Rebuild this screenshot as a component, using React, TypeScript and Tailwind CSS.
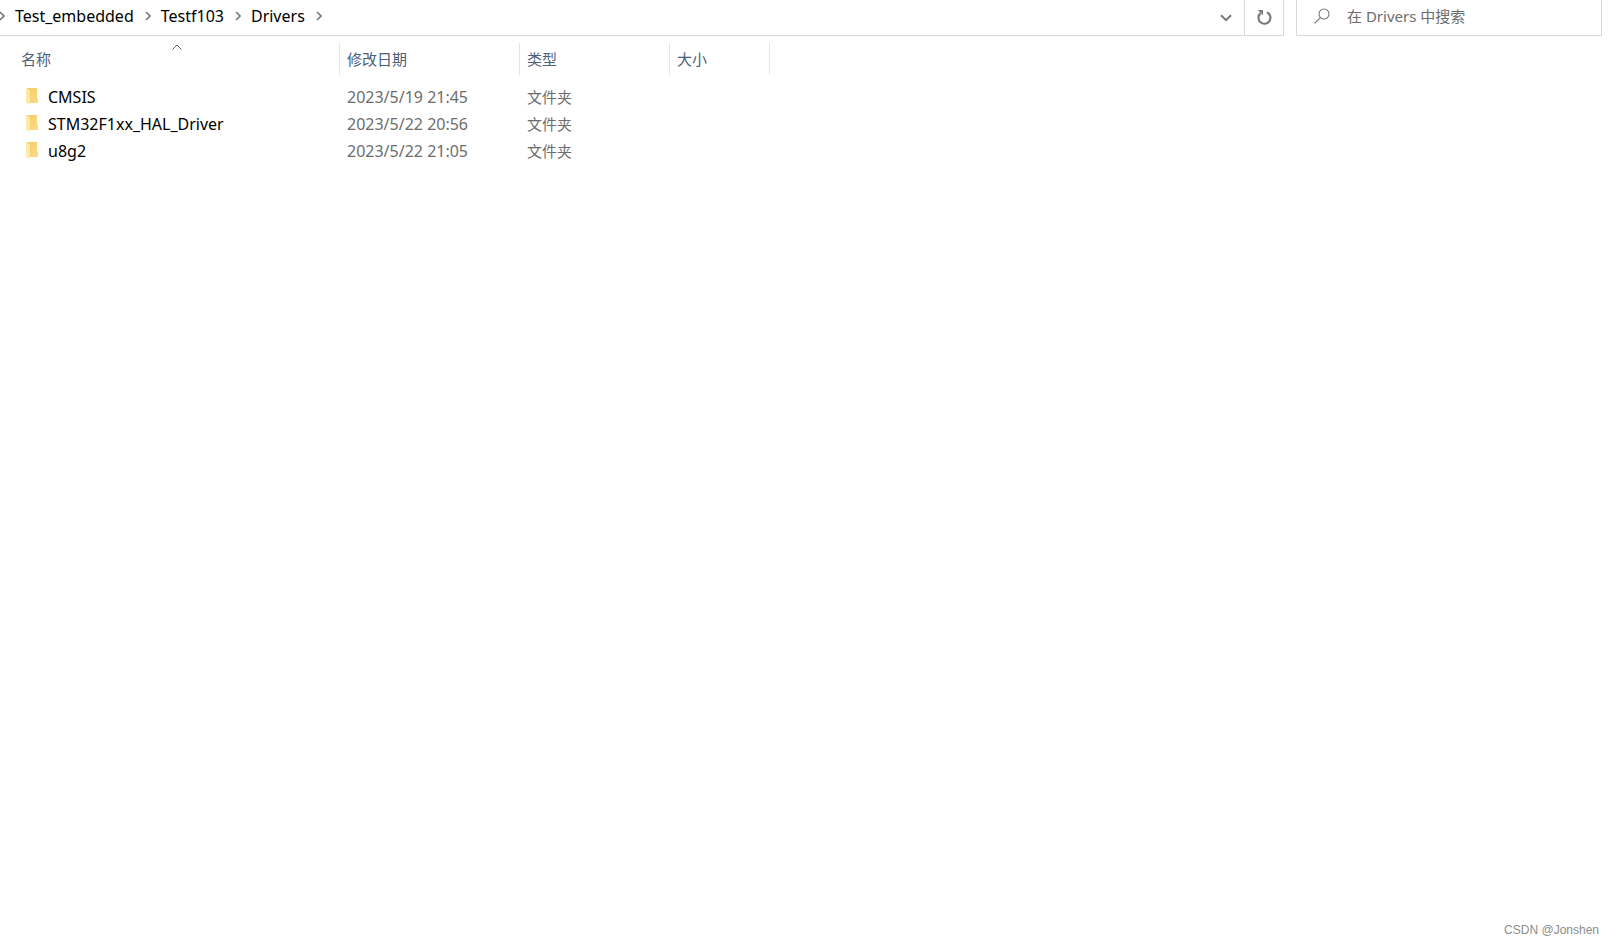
import { useState } from "react";

interface Entry {
  name: string;
  modified: string;
  type: string;
}

const crumbs = ["Test_embedded", "Testf103", "Drivers"];

const entries: Entry[] = [
  { name: "CMSIS", modified: "2023/5/19 21:45", type: "文件夹" },
  { name: "STM32F1xx_HAL_Driver", modified: "2023/5/22 20:56", type: "文件夹" },
  { name: "u8g2", modified: "2023/5/22 21:05", type: "文件夹" },
];

function CrumbChevron() {
  return (
    <svg viewBox="0 0 6 10" className="h-[10px] w-[6px] shrink-0" aria-hidden="true">
      <path d="M1 1l4 4-4 4" fill="none" stroke="#7a7a7a" strokeWidth="1.6" />
    </svg>
  );
}

function FolderIcon() {
  return (
    <svg viewBox="0 0 13 20" className="h-5 w-[13px] shrink-0" aria-hidden="true">
      <defs>
        <linearGradient id="folder-back" x1="0" y1="0" x2="1" y2="1">
          <stop offset="0" stopColor="#f1cb6b" />
          <stop offset="1" stopColor="#fbdc83" />
        </linearGradient>
      </defs>
      <path d="M1 1h10v9.5l1 1V16H1z" fill="url(#folder-back)" />
      <path d="M0 1l4 2.2v11.3L3 18 0 15.5z" fill="#ffe9a9" />
    </svg>
  );
}

function AddressBar() {
  return (
    <div className="flex h-9 min-w-0 flex-1 border-r border-b border-[#d9d9d9]">
      <nav aria-label="路径" className="flex min-w-0 flex-1 items-center pb-1">
        <div className="flex w-[5px] justify-end overflow-hidden">
          <CrumbChevron />
        </div>
        <ol className="flex items-center">
          {crumbs.map((crumb) => (
            <li key={crumb} className="flex items-center">
              <a href="#" className="pr-[11px] pl-[10px] text-[16px] leading-[20px] text-black">
                {crumb}
              </a>
              <CrumbChevron />
            </li>
          ))}
        </ol>
      </nav>
      <button type="button" aria-label="以前的位置" className="flex w-9 items-center justify-center">
        <svg viewBox="0 0 12 8" className="h-2 w-3">
          <path d="M1 1.2l5 5 5-5" fill="none" stroke="#777" strokeWidth="2" />
        </svg>
      </button>
      <button
        type="button"
        aria-label="刷新"
        className="flex w-[39px] items-center justify-center border-l border-[#d9d9d9] pb-[1px]"
      >
        <svg viewBox="0 0 16 16" className="h-4 w-4">
          <path d="M11 3.300A6 6 0 1 1 4.600 4.100" fill="none" stroke="#777" strokeWidth="2.1" />
          <path d="M1.800 1H7v5.200L5.300 4.600 3.600 2.700z" fill="#777" />
        </svg>
      </button>
    </div>
  );
}

function SearchBox() {
  const [query, setQuery] = useState("");

  return (
    <label className="flex h-9 w-[306px] items-center border-x border-b border-[#d9d9d9] pb-1 pl-[17px]">
      <svg viewBox="0 0 16 16" className="h-4 w-4 shrink-0" aria-hidden="true">
        <circle cx="10" cy="6" r="5" fill="none" stroke="#777" strokeWidth="1.1" />
        <path d="M6.4 9.6L.6 15.4" stroke="#777" strokeWidth="1.2" />
      </svg>
      <input
        type="text"
        aria-label="搜索"
        placeholder="在 Drivers 中搜索"
        value={query}
        onChange={(e) => setQuery(e.target.value)}
        className="ml-[17px] min-w-0 flex-1 bg-transparent outline-none placeholder:text-[#6d6d6d]"
      />
    </label>
  );
}

export default function App() {
  return (
    <div className="flex min-h-screen flex-col bg-white font-['Noto_Sans','Noto_Sans_CJK_SC',sans-serif] text-[15px] leading-[20px]">
      <header className="flex gap-3 pr-3">
        <AddressBar />
        <SearchBox />
      </header>

      <main className="flex-1 pt-[7px]">
        <table className="w-[770px] table-fixed border-separate border-spacing-0 text-left">
          <thead>
            <tr className="h-8 text-[#4c607a]">
              <th className="relative w-[340px] border-r border-[#e5e5e5] pl-[21px] font-normal">
                <button type="button">名称</button>
                <svg viewBox="0 0 10 6" className="absolute top-px left-[172px] h-[6px] w-[10px]" aria-hidden="true">
                  <path d="M.5 5.500L5 1l4.500 4.500" fill="none" stroke="#666" />
                </svg>
              </th>
              <th className="w-[180px] border-r border-[#e5e5e5] pl-[7px] font-normal">
                <button type="button">修改日期</button>
              </th>
              <th className="w-[150px] border-r border-[#e5e5e5] pl-[7px] font-normal">
                <button type="button">类型</button>
              </th>
              <th className="w-[100px] border-r border-[#e5e5e5] pl-[7px] font-normal">
                <button type="button">大小</button>
              </th>
            </tr>
          </thead>
          <tbody className="before:block before:h-2">
            {entries.map((entry) => (
              <tr key={entry.name} className="h-[27px] text-[#6d6d6d]">
                <td className="pl-[26px] text-[16px] leading-[20px] text-black">
                  <div className="flex items-center gap-[9px]">
                    <FolderIcon />
                    <span>{entry.name}</span>
                  </div>
                </td>
                <td className="pl-[7px] text-[16px] leading-[20px]">{entry.modified}</td>
                <td className="pl-[7px]">{entry.type}</td>
                <td />
              </tr>
            ))}
          </tbody>
        </table>
      </main>

      <footer className="pr-[15px] pb-1 text-right font-['Liberation_Sans',sans-serif] text-[12px] text-[#8c8c8c]">
        CSDN @Jonshen
      </footer>
    </div>
  );
}
